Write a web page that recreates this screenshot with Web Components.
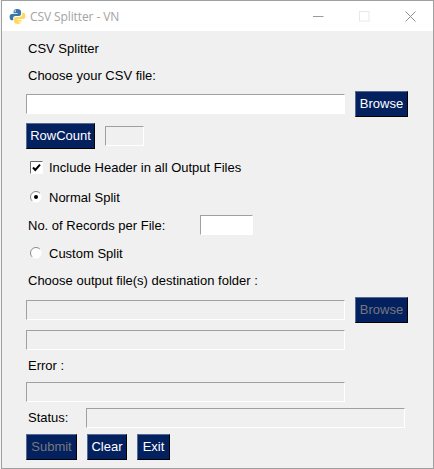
<!DOCTYPE html>
<html>
<head>
<meta charset="utf-8">
<title>CSV Splitter - VN</title>
<style>
    html, body { margin: 0; padding: 0; background: #f4f4f4; }
</style>
</head>
<body>
<template id="titleTpl">
    <style>
        :host { display: flex; align-items: center; height: 30px; background: #fff; flex: none; }
        svg { display: block; flex: none; }
        .logo { margin-left: 7px; }
        .title { margin-left: 4px; flex: 1; font: 12px "Open Sans", "Liberation Sans", sans-serif; letter-spacing: -.1px; color: #a3a3a3; }
        .ctl { width: 46px; height: 30px; display: flex; align-items: center; justify-content: center; }
    </style>
    <svg class="logo" width="17" height="17" viewBox="0 0 17 17">
        <path d="M8.300 1C5.600 1 4.600 2 4.600 3.400V5.200H8.600V6H2.800C1.400 6 .6 7.200 .6 9S1.300 12.200 2.600 12.200H4.200V10C4.200 8.800 5.200 8 6.400 8H10C11.200 8 12 7.200 12 6V3.400C12 2 10.600 1 8.300 1Z" fill="#3b74a8"/>
        <circle cx="6.200" cy="3.100" r=".8" fill="#fff"/>
        <path d="M8.700 16C11.400 16 12.400 15 12.400 13.600V11.800H8.400V11H14.200C15.600 11 16.400 9.800 16.400 8S15.700 4.800 14.400 4.800H12.800V7C12.800 8.200 11.800 9 10.600 9H7C5.800 9 5 9.800 5 11V13.600C5 15 6.400 16 8.700 16Z" fill="#ffd95c"/>
        <circle cx="10.800" cy="13.900" r=".8" fill="#fff"/>
    </svg>
    <span class="title"><slot></slot></span>
    <div class="ctl"><svg width="11" height="11"><path d="M0 5.500H10.500" stroke="#9a9a9a" fill="none"/></svg></div>
    <div class="ctl"><svg width="11" height="11"><rect x=".5" y=".5" width="9.500" height="9.500" stroke="#e8e8e8" fill="none"/></svg></div>
    <div class="ctl"><svg width="11" height="11"><path d="M.5 .5L10.500 10.500M10.500 .5L.5 10.500" stroke="#8f8f8f" fill="none"/></svg></div>
</template>

<template id="btnTpl">
    <style>
        :host { display: block; flex: none; box-sizing: border-box; height: 26px; background: #04215f;
            border: 1px solid; border-color: #566a94 #000 #000 #566a94;
            color: #fff; font: 13px "Liberation Sans", sans-serif; text-align: center; line-height: 24px; }
        :host([disabled]) { color: #74787c; }
    </style>
    <slot></slot>
</template>

<template id="entryTpl">
    <style>
        :host { display: block; flex: none; box-sizing: border-box; height: 20px; background: #f0f0f0;
            border: 1px solid; border-color: #a0a0a0 #fff #fff #a0a0a0; }
        :host([white]) { background: #fff; }
    </style>
</template>

<template id="labelTpl">
    <style>
        :host { display: block; flex: none; font: 13px "Liberation Sans", sans-serif; color: #000; line-height: 16px; padding-left: 2px; }
    </style>
    <slot></slot>
</template>

<template id="checkTpl">
    <style>
        :host { display: flex; align-items: center; flex: none; height: 16px; padding-left: 4px;
            font: 13px "Liberation Sans", sans-serif; color: #000; }
        svg { display: block; flex: none; margin-right: 6px; }
    </style>
    <svg width="13" height="13" viewBox="0 0 13 13">
        <rect width="13" height="13" fill="#fff"/>
        <path d="M.5 12.500V.5H12.500" stroke="#696969" fill="none"/>
        <path d="M3 6.500L5.300 9L10 3.600" stroke="#000" stroke-width="2" fill="none"/>
    </svg>
    <slot></slot>
</template>

<template id="radioTpl">
    <style>
        :host { display: flex; align-items: center; flex: none; height: 16px; padding-left: 4px;
            font: 13px "Liberation Sans", sans-serif; color: #000; }
        svg { display: block; flex: none; margin-right: 7px; }
        .dot { display: none; }
        :host([checked]) .dot { display: block; }
    </style>
    <svg width="12" height="12" viewBox="0 0 12 12">
        <circle cx="6" cy="6" r="5.500" fill="#fff"/>
        <path d="M2.100 9.900A5.500 5.500 0 0 1 9.900 2.100" stroke="#8a8a8a" fill="none"/>
        <circle class="dot" cx="6" cy="6" r="2" fill="#000"/>
    </svg>
    <slot></slot>
</template>

<template id="windowTpl">
    <style>
        :host { display: flex; flex-direction: column; box-sizing: border-box; width: 433px; height: 469px; margin-left: 1px;
            background: #f0f0f0; border: 1px solid #a0a0a0; }
        .body { display: flex; flex-direction: column; padding-left: 24px; flex: 1; }
        .row { display: flex; align-items: center; flex: none; }
        .split { justify-content: space-between; width: 382px; }
    </style>
    <title-bar>CSV Splitter - VN</title-bar>
    <div class="body">
        <form-label style="margin-top:10px">CSV Splitter</form-label>
        <form-label style="margin-top:11px">Choose your CSV file:</form-label>
        <div class="row split" style="margin-top:7px">
            <text-entry white style="width:319px"></text-entry>
            <dark-button style="width:53px">Browse</dark-button>
        </div>
        <div class="row" style="margin-top:6px;gap:10px">
            <dark-button style="width:69px">RowCount</dark-button>
            <text-entry style="width:39px"></text-entry>
        </div>
        <check-box style="margin-top:10px">Include Header in all Output Files</check-box>
        <radio-box checked style="margin-top:14px">Normal Split</radio-box>
        <div class="row" style="margin-top:10px">
            <form-label style="width:172px;padding-top:2px">No. of Records per File:</form-label>
            <text-entry white style="width:53px"></text-entry>
        </div>
        <radio-box style="margin-top:10px">Custom Split</radio-box>
        <form-label style="margin-top:12px">Choose output file(s) destination folder :</form-label>
        <div class="row split" style="margin-top:8px">
            <text-entry style="width:319px"></text-entry>
            <dark-button disabled style="width:53px">Browse</dark-button>
        </div>
        <text-entry style="width:319px;margin-top:7px"></text-entry>
        <form-label style="margin-top:8px">Error :</form-label>
        <text-entry style="width:319px;margin-top:8px"></text-entry>
        <div class="row" style="margin-top:6px">
            <form-label style="width:58px">Status:</form-label>
            <text-entry style="width:319px"></text-entry>
        </div>
        <div class="row" style="margin-top:6px;gap:10px">
            <dark-button disabled style="width:51px">Submit</dark-button>
            <dark-button style="width:40px">Clear</dark-button>
            <dark-button style="width:33px">Exit</dark-button>
        </div>
    </div>
</template>

<app-window></app-window>

<script>
    function define(name, tplId) {
        customElements.define(name, class extends HTMLElement {
            constructor() {
                super();
                this.attachShadow({ mode: 'open' });
                this.shadowRoot.appendChild(document.getElementById(tplId).content.cloneNode(true));
            }
        });
    }

    define('title-bar', 'titleTpl');
    define('dark-button', 'btnTpl');
    define('text-entry', 'entryTpl');
    define('form-label', 'labelTpl');
    define('check-box', 'checkTpl');
    define('radio-box', 'radioTpl');
    define('app-window', 'windowTpl');
</script>
</body>
</html>
